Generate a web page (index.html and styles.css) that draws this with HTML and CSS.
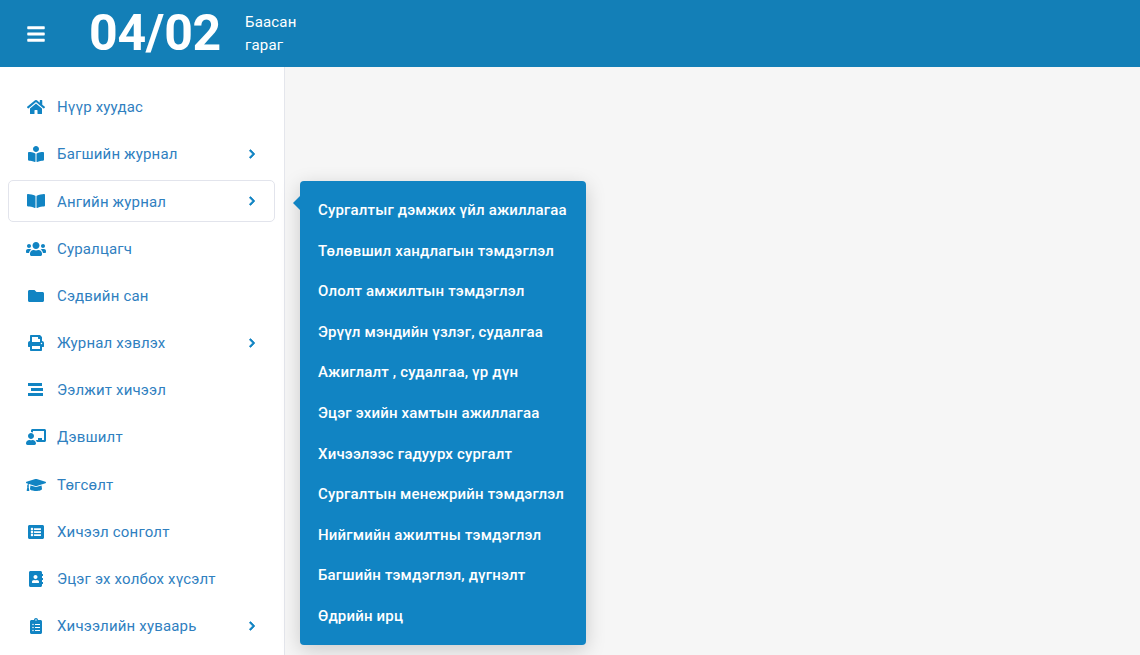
FILE: index.html
```html
<!DOCTYPE html>
<html lang="mn">
<head>
<meta charset="utf-8">
<title>Журнал</title>
<link rel="stylesheet" href="styles.css">
</head>
<body>
<header class="topbar">
  <button class="burger" type="button" aria-label="Цэс">
    <svg class="burger-icon" viewBox="0 0 448 512"><path d="M16 132h416c8.837 0 16-7.163 16-16V76c0-8.837-7.163-16-16-16H16C7.163 60 0 67.163 0 76v40c0 8.837 7.163 16 16 16zm0 160h416c8.837 0 16-7.163 16-16v-40c0-8.837-7.163-16-16-16H16c-8.837 0-16 7.163-16 16v40c0 8.837 7.163 16 16 16zm0 160h416c8.837 0 16-7.163 16-16v-40c0-8.837-7.163-16-16-16H16c-8.837 0-16 7.163-16 16v40c0 8.837 7.163 16 16 16z"/></svg>
  </button>
  <div class="date">04/02</div>
  <div class="day">Баасан<br>гараг</div>
</header>
<div class="layout">
  <nav class="sidebar">
    <a class="item"><span class="ico"><svg viewBox="0 0 576 512"><path d="M280.37 148.26L96 300.11V464a16 16 0 0 0 16 16l112.06-.29a16 16 0 0 0 15.92-16V368a16 16 0 0 1 16-16h64a16 16 0 0 1 16 16v95.64a16 16 0 0 0 16 16.05L464 480a16 16 0 0 0 16-16V300L295.67 148.26a12.19 12.19 0 0 0-15.3 0zM571.6 251.47L488 182.56V44.05a12 12 0 0 0-12-12h-56a12 12 0 0 0-12 12v72.61L318.47 43a48 48 0 0 0-61 0L4.34 251.47a12 12 0 0 0-1.6 16.9l25.5 31A12 12 0 0 0 45.15 301l235.22-193.74a12.19 12.19 0 0 1 15.3 0L530.9 301a12 12 0 0 0 16.9-1.6l25.5-31a12 12 0 0 0-1.7-16.93z"/></svg></span><span class="label">Нүүр хуудас</span></a>
    <a class="item"><span class="ico"><svg viewBox="0 0 512 512"><path d="M352 96c0-53.02-42.98-96-96-96s-96 42.98-96 96 42.98 96 96 96 96-42.98 96-96zM233.59 241.1c-59.33-36.32-155.43-46.3-203.79-49.05C13.55 191.13 0 203.51 0 219.14v222.8c0 14.33 11.59 26.28 26.49 27.05 43.66 2.29 131.99 10.68 193.04 41.43 9.37 4.72 20.48-1.71 20.48-11.87V252.56c-.01-4.67-2.32-8.95-6.42-11.46zm248.61-49.05c-48.35 2.74-144.46 12.73-203.78 49.05-4.1 2.51-6.41 6.96-6.41 11.63v245.79c0 10.19 11.14 16.63 20.54 11.9 61.04-30.72 149.32-39.11 192.97-41.4 14.9-.78 26.49-12.73 26.49-27.06V219.14c-.01-15.63-13.56-28.01-29.81-27.09z"/></svg></span><span class="label">Багшийн журнал</span><svg class="chev" viewBox="0 0 320 512"><path d="M285.476 272.971L91.132 467.314c-9.373 9.373-24.569 9.373-33.941 0l-22.667-22.667c-9.357-9.357-9.375-24.522-.04-33.901L188.505 256 34.484 101.255c-9.335-9.379-9.317-24.544.04-33.901l22.667-22.667c9.373-9.373 24.569-9.373 33.941 0L285.475 239.03c9.373 9.372 9.373 24.568.001 33.941z"/></svg></a>
    <a class="item active"><span class="ico"><svg viewBox="0 0 576 512"><path d="M542.22 32.05c-54.8 3.11-163.72 14.43-230.96 55.59-4.64 2.84-7.27 7.89-7.27 13.17v363.87c0 11.55 12.63 18.85 23.28 13.49 69.18-34.82 169.23-44.32 218.7-46.92 16.89-.89 30.02-14.43 30.02-30.66V62.75c.01-17.71-15.35-31.74-33.77-30.7zM264.73 87.64C197.5 46.48 88.58 35.17 33.78 32.05 15.36 31.01 0 45.04 0 62.75V400.6c0 16.24 13.13 29.78 30.02 30.66 49.49 2.6 149.59 12.11 218.77 46.95 10.62 5.35 23.21-1.94 23.21-13.46V100.63c0-5.29-2.62-10.14-7.27-12.99z"/></svg></span><span class="label">Ангийн журнал</span><svg class="chev" viewBox="0 0 320 512"><path d="M285.476 272.971L91.132 467.314c-9.373 9.373-24.569 9.373-33.941 0l-22.667-22.667c-9.357-9.357-9.375-24.522-.04-33.901L188.505 256 34.484 101.255c-9.335-9.379-9.317-24.544.04-33.901l22.667-22.667c9.373-9.373 24.569-9.373 33.941 0L285.475 239.03c9.373 9.372 9.373 24.568.001 33.941z"/></svg></a>
    <a class="item"><span class="ico"><svg viewBox="0 0 640 512"><path d="M96 224c35.3 0 64-28.7 64-64s-28.7-64-64-64-64 28.7-64 64 28.7 64 64 64zm448 0c35.3 0 64-28.7 64-64s-28.7-64-64-64-64 28.7-64 64 28.7 64 64 64zm32 32h-64c-17.6 0-33.5 7.1-45.1 18.6 40.3 22.1 68.9 62 75.1 109.4h66c17.7 0 32-14.3 32-32v-32c0-35.3-28.7-64-64-64zm-256 0c61.9 0 112-50.1 112-112S381.9 32 320 32 208 82.1 208 144s50.1 112 112 112zm76.8 32h-8.3c-20.8 10-43.9 16-68.5 16s-47.6-6-68.5-16h-8.3C179.6 288 128 339.6 128 403.2V432c0 26.5 21.5 48 48 48h288c26.5 0 48-21.5 48-48v-28.8c0-63.6-51.6-115.2-115.2-115.2zm-223.7-13.4C161.5 263.1 145.6 256 128 256H64c-35.3 0-64 28.7-64 64v32c0 17.7 14.3 32 32 32h65.9c6.3-47.4 34.9-87.3 75.2-109.4z"/></svg></span><span class="label">Суралцагч</span></a>
    <a class="item"><span class="ico"><svg viewBox="0 0 512 512"><path d="M464 128H272l-64-64H48C21.49 64 0 85.49 0 112v288c0 26.51 21.49 48 48 48h416c26.51 0 48-21.49 48-48V176c0-26.51-21.49-48-48-48z"/></svg></span><span class="label">Сэдвийн сан</span></a>
    <a class="item"><span class="ico"><svg viewBox="0 0 512 512"><path d="M448 192V77.25c0-8.49-3.37-16.62-9.37-22.63L393.37 9.37c-6-6-14.14-9.37-22.63-9.37H96C78.33 0 64 14.33 64 32v160c-35.35 0-64 28.65-64 64v112c0 8.84 7.16 16 16 16h48v96c0 17.67 14.33 32 32 32h320c17.67 0 32-14.33 32-32v-96h48c8.84 0 16-7.16 16-16V256c0-35.35-28.65-64-64-64zm-64 256H128v-96h256v96zm0-224H128V64h192v48c0 8.84 7.16 16 16 16h48v96zm48 72c-13.25 0-24-10.75-24-24 0-13.26 10.75-24 24-24s24 10.74 24 24c0 13.25-10.75 24-24 24z"/></svg></span><span class="label">Журнал хэвлэх</span><svg class="chev" viewBox="0 0 320 512"><path d="M285.476 272.971L91.132 467.314c-9.373 9.373-24.569 9.373-33.941 0l-22.667-22.667c-9.357-9.357-9.375-24.522-.04-33.901L188.505 256 34.484 101.255c-9.335-9.379-9.317-24.544.04-33.901l22.667-22.667c9.373-9.373 24.569-9.373 33.941 0L285.475 239.03c9.373 9.372 9.373 24.568.001 33.941z"/></svg></a>
    <a class="item"><span class="ico"><svg viewBox="0 0 16 16"><path d="M0 1h14v3H0zM3 6h12v3H3zM0 11h15v3H0z"/></svg></span><span class="label">Ээлжит хичээл</span></a>
    <a class="item"><span class="ico"><svg viewBox="0 0 640 512"><path d="M208 352c-2.39 0-4.78.35-7.06 1.09C187.98 357.3 174.35 360 160 360c-14.35 0-27.98-2.7-40.95-6.91-2.28-.74-4.66-1.09-7.05-1.09C49.94 352-.33 402.48 0 464.62.14 490.88 21.73 512 48 512h224c26.27 0 47.86-21.12 48-47.38.33-62.14-49.94-112.62-112-112.62zm-48-32c53.02 0 96-42.98 96-96s-42.98-96-96-96-96 42.98-96 96 42.98 96 96 96zM592 0H208c-26.47 0-48 22.25-48 49.59V96c23.42 0 45.1 6.78 64 17.8V64h352v288h-64v-64H384v64h-76.24c19.1 16.69 33.12 38.73 39.69 64H592c26.47 0 48-22.25 48-49.59V49.59C640 22.25 618.47 0 592 0z"/></svg></span><span class="label">Дэвшилт</span></a>
    <a class="item"><span class="ico"><svg viewBox="0 0 640 512"><path d="M622.34 153.2L343.4 67.5c-15.2-4.67-31.6-4.67-46.79 0L17.66 153.2c-23.54 7.23-23.54 38.36 0 45.59l48.63 14.94c-10.67 13.19-17.23 29.28-17.88 46.9C38.78 266.15 32 276.11 32 288c0 10.78 5.68 19.85 13.86 25.65L20.33 428.53C18.11 438.52 25.71 448 35.94 448h56.11c10.24 0 17.84-9.48 15.62-19.47L82.14 313.65C90.32 307.85 96 298.78 96 288c0-11.57-6.47-21.25-15.66-26.87.76-15.02 8.44-28.3 20.69-36.72L296.6 284.5c9.06 2.78 26.44 6.25 46.79 0l278.95-85.7c23.55-7.24 23.55-38.36 0-45.6zM352.79 315.09c-28.53 8.76-52.84 3.92-65.59 0l-145.02-44.55L128 384c0 35.35 85.96 64 192 64s192-28.65 192-64l-14.18-113.47-145.03 44.56z"/></svg></span><span class="label">Төгсөлт</span></a>
    <a class="item"><span class="ico"><svg viewBox="0 0 512 512"><path d="M464 480H48c-26.51 0-48-21.49-48-48V80c0-26.51 21.49-48 48-48h416c26.51 0 48 21.49 48 48v352c0 26.51-21.49 48-48 48zM128 120c-22.091 0-40 17.909-40 40s17.909 40 40 40 40-17.909 40-40-17.909-40-40-40zm0 96c-22.091 0-40 17.909-40 40s17.909 40 40 40 40-17.909 40-40-17.909-40-40-40zm0 96c-22.091 0-40 17.909-40 40s17.909 40 40 40 40-17.909 40-40-17.909-40-40-40zm288-136v-32c0-6.627-5.373-12-12-12H204c-6.627 0-12 5.373-12 12v32c0 6.627 5.373 12 12 12h200c6.627 0 12-5.373 12-12zm0 96v-32c0-6.627-5.373-12-12-12H204c-6.627 0-12 5.373-12 12v32c0 6.627 5.373 12 12 12h200c6.627 0 12-5.373 12-12zm0 96v-32c0-6.627-5.373-12-12-12H204c-6.627 0-12 5.373-12 12v32c0 6.627 5.373 12 12 12h200c6.627 0 12-5.373 12-12z"/></svg></span><span class="label">Хичээл сонголт</span></a>
    <a class="item"><span class="ico"><svg viewBox="0 0 448 512"><path d="M436 160c6.6 0 12-5.4 12-12v-40c0-6.6-5.4-12-12-12h-20V48c0-26.5-21.5-48-48-48H48C21.5 0 0 21.5 0 48v416c0 26.5 21.5 48 48 48h320c26.5 0 48-21.5 48-48v-48h20c6.6 0 12-5.4 12-12v-40c0-6.6-5.4-12-12-12h-20v-64h20c6.6 0 12-5.4 12-12v-40c0-6.6-5.4-12-12-12h-20v-64h20zm-228-32c35.3 0 64 28.7 64 64s-28.7 64-64 64-64-28.7-64-64 28.7-64 64-64zm112 236.8c0 10.6-10 19.2-22.4 19.2H118.4C106 384 96 375.4 96 364.8v-19.2c0-31.8 30.1-57.6 67.2-57.6h5c12.3 5.1 25.7 8 39.8 8s27.6-2.9 39.8-8h5c37.1 0 67.2 25.8 67.2 57.6v19.2z"/></svg></span><span class="label">Эцэг эх холбох хүсэлт</span></a>
    <a class="item"><span class="ico"><svg viewBox="0 0 384 512"><path d="M336 64h-80c0-35.3-28.7-64-64-64s-64 28.7-64 64H48C21.5 64 0 85.5 0 112v352c0 26.5 21.5 48 48 48h288c26.5 0 48-21.5 48-48V112c0-26.5-21.5-48-48-48zM96 424c-13.3 0-24-10.7-24-24s10.7-24 24-24 24 10.7 24 24-10.7 24-24 24zm0-96c-13.3 0-24-10.7-24-24s10.7-24 24-24 24 10.7 24 24-10.7 24-24 24zm0-96c-13.3 0-24-10.7-24-24s10.7-24 24-24 24 10.7 24 24-10.7 24-24 24zm96-192c13.3 0 24 10.7 24 24s-10.7 24-24 24-24-10.7-24-24 10.7-24 24-24zm128 368c0 4.4-3.6 8-8 8H168c-4.4 0-8-3.6-8-8v-16c0-4.4 3.6-8 8-8h144c4.4 0 8 3.6 8 8v16zm0-96c0 4.4-3.6 8-8 8H168c-4.4 0-8-3.6-8-8v-16c0-4.4 3.6-8 8-8h144c4.4 0 8 3.6 8 8v16zm0-96c0 4.4-3.6 8-8 8H168c-4.4 0-8-3.6-8-8v-16c0-4.4 3.6-8 8-8h144c4.4 0 8 3.6 8 8v16z"/></svg></span><span class="label">Хичээлийн хуваарь</span><svg class="chev" viewBox="0 0 320 512"><path d="M285.476 272.971L91.132 467.314c-9.373 9.373-24.569 9.373-33.941 0l-22.667-22.667c-9.357-9.357-9.375-24.522-.04-33.901L188.505 256 34.484 101.255c-9.335-9.379-9.317-24.544.04-33.901l22.667-22.667c9.373-9.373 24.569-9.373 33.941 0L285.475 239.03c9.373 9.372 9.373 24.568.001 33.941z"/></svg></a>
  </nav>
  <main class="content">
    <ul class="submenu">
      <li>Сургалтыг дэмжих үйл ажиллагаа</li>
      <li>Төлөвшил хандлагын тэмдэглэл</li>
      <li>Ололт амжилтын тэмдэглэл</li>
      <li>Эрүүл мэндийн үзлэг, судалгаа</li>
      <li>Ажиглалт , судалгаа, үр дүн</li>
      <li>Эцэг эхийн хамтын ажиллагаа</li>
      <li>Хичээлээс гадуурх сургалт</li>
      <li>Сургалтын менежрийн тэмдэглэл</li>
      <li>Нийгмийн ажилтны тэмдэглэл</li>
      <li>Багшийн тэмдэглэл, дүгнэлт</li>
      <li>Өдрийн ирц</li>
    </ul>
  </main>
</div>
</body>
</html>
```
FILE: styles.css
```css
* { box-sizing: border-box; }
html, body { height: 100%; }
body {
  margin: 0;
  overflow: hidden;
  font-family: Roboto, "Noto Sans", sans-serif;
  font-size: 15px;
  background: #f6f6f6;
}
.topbar {
  display: flex;
  align-items: center;
  height: 67px;
  background: #137fb7;
  color: #fff;
  padding-left: 27px;
}
.burger {
  display: flex;
  width: 18px;
  height: 20px;
  margin-right: 44px;
  padding: 0;
  border: 0;
  background: none;
}
.burger-icon { width: 18px; height: 20px; fill: #fff; }
.date {
  font-size: 50px;
  font-weight: 700;
  line-height: 67px;
  letter-spacing: -.25px;
  margin-right: 24px;
}
.day { line-height: 23px; letter-spacing: .17px; }
.layout { display: flex; height: 588px; }
.sidebar {
  flex: 0 0 285px;
  background: #fff;
  border-right: 1px solid #e4e6ec;
  padding: 19px 9px 0 8px;
}
.item {
  display: flex;
  align-items: center;
  height: 42px;
  margin-bottom: 5.2px;
  padding: 0 17px;
  border: 1px solid transparent;
  border-radius: 5px;
  color: #2f80bf;
  letter-spacing: .17px;
}
.item.active { border-color: #e2e4ec; }
.item.active .label { padding-top: 1px; }
.ico {
  display: flex;
  justify-content: center;
  flex: 0 0 20px;
  margin-right: 11px;
}
.ico svg { height: 16px; fill: #1184c3; }
.label { flex: 1; }
.chev {
  width: 6.25px;
  height: 10px;
  margin-right: 2px;
  fill: #1184c3;
  stroke: #1184c3;
  stroke-width: 40px;
}
.content { flex: 1; position: relative; }
.submenu {
  position: absolute;
  left: 15px;
  top: 114px;
  width: 286px;
  height: 464px;
  margin: 0;
  padding: 8.8px 0;
  list-style: none;
  background: #1184c3;
  border-radius: 4px;
  box-shadow: 0 5px 20px rgba(0, 0, 0, .18);
}
.submenu::before {
  content: "";
  position: absolute;
  left: -7px;
  top: 15px;
  border-style: solid;
  border-width: 7px 7px 7px 0;
  border-color: transparent #1184c3 transparent transparent;
}
.submenu li {
  display: flex;
  align-items: center;
  height: 40.6px;
  padding-left: 18px;
  color: #fff;
  font-weight: 500;
  letter-spacing: .17px;
}
```
